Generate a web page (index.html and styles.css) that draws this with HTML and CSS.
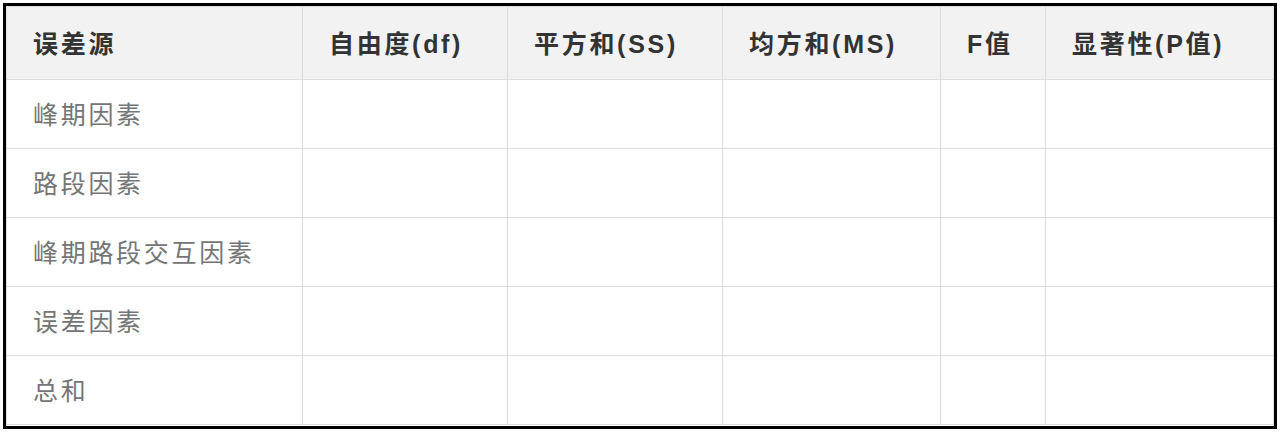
FILE: index.html
```html
<!DOCTYPE html>
<html lang="zh-CN">
<head>
<meta charset="utf-8">
<link rel="stylesheet" href="styles.css">
</head>
<body>
<div class="frame">
  <table class="anova">
    <colgroup>
      <col class="c1"><col class="c2"><col class="c3"><col class="c4"><col class="c5"><col class="c6">
    </colgroup>
    <thead>
      <tr>
        <th>误差源</th>
        <th>自由度(df)</th>
        <th>平方和(SS)</th>
        <th>均方和(MS)</th>
        <th>F值</th>
        <th>显著性(P值)</th>
      </tr>
    </thead>
    <tbody>
      <tr><td>峰期因素</td><td></td><td></td><td></td><td></td><td></td></tr>
      <tr><td>路段因素</td><td></td><td></td><td></td><td></td><td></td></tr>
      <tr><td>峰期路段交互因素</td><td></td><td></td><td></td><td></td><td></td></tr>
      <tr><td>误差因素</td><td></td><td></td><td></td><td></td><td></td></tr>
      <tr><td>总和</td><td></td><td></td><td></td><td></td><td></td></tr>
    </tbody>
  </table>
</div>
</body>
</html>
```
FILE: styles.css
```css
html, body {
  margin: 0;
  padding: 0;
  background: #ffffff;
}
.frame {
  margin: 3px;
  width: 1268px;
  border: 3px solid #000000;
  padding: 0 0 1px 0;
}
.anova {
  width: 1267px;
  border-collapse: collapse;
  table-layout: fixed;
  font-family: "Liberation Sans", "Noto Sans CJK SC", sans-serif;
  font-size: 25px;
  letter-spacing: 2.7px;
}
.c1 { width: 296px; }
.c2 { width: 205px; }
.c3 { width: 215px; }
.c4 { width: 218px; }
.c5 { width: 105px; }
.c6 { width: 228px; }
.anova th,
.anova td {
  border: 1px solid #dcdcdc;
  padding: 0 0 2px 26px;
  text-align: left;
  vertical-align: middle;
}
.anova th {
  height: 70px;
  background: #f2f2f2;
  color: #333333;
  font-weight: bold;
}
.anova td {
  height: 66px;
  color: #757575;
  font-weight: normal;
}
```
